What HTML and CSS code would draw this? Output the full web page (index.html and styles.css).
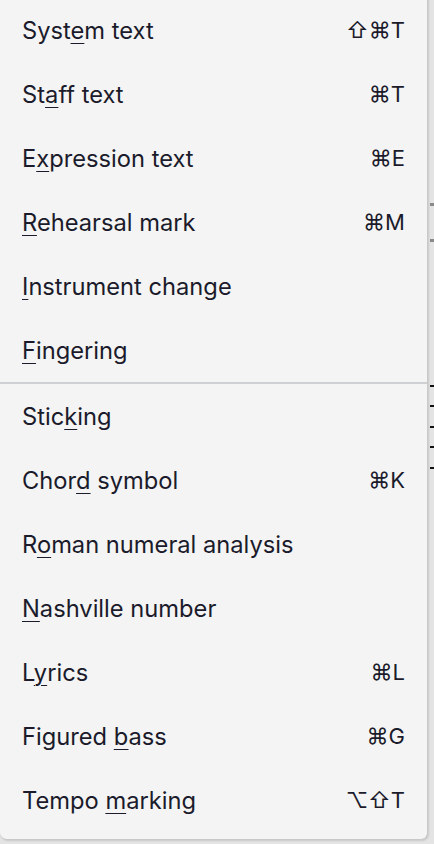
FILE: index.html
```html
<!DOCTYPE html>
<html lang="en">
<head>
    <meta charset="UTF-8">
    <meta name="viewport" content="width=device-width, initial-scale=1.0">
    <title>Text menu</title>
    <link rel="stylesheet" href="styles.css">
</head>
<body>
    <div class="score">
        <span class="mark grey" style="top: 203px;"></span>
        <span class="mark grey" style="top: 239px;"></span>
        <span class="mark" style="top: 385px;"></span>
        <span class="mark" style="top: 405px;"></span>
        <span class="mark" style="top: 426px;"></span>
        <span class="mark" style="top: 446px;"></span>
        <span class="mark" style="top: 467px;"></span>
    </div>

    <div class="menu">
        <div class="menu-group">
            <div class="menu-item"><span class="label">Syst<u>e</u>m text</span><span class="shortcut">⇧⌘T</span></div>
            <div class="menu-item"><span class="label">St<u>a</u>ff text</span><span class="shortcut">⌘T</span></div>
            <div class="menu-item"><span class="label">E<u>x</u>pression text</span><span class="shortcut">⌘E</span></div>
            <div class="menu-item"><span class="label"><u>R</u>ehearsal mark</span><span class="shortcut">⌘M</span></div>
            <div class="menu-item"><span class="label"><u>I</u>nstrument change</span></div>
            <div class="menu-item"><span class="label"><u>F</u>ingering</span></div>
        </div>
        <div class="divider"></div>
        <div class="menu-group">
            <div class="menu-item"><span class="label">Stic<u>k</u>ing</span></div>
            <div class="menu-item"><span class="label">Chor<u>d</u> symbol</span><span class="shortcut">⌘K</span></div>
            <div class="menu-item"><span class="label">R<u>o</u>man numeral analysis</span></div>
            <div class="menu-item"><span class="label"><u>N</u>ashville number</span></div>
            <div class="menu-item"><span class="label">L<u>y</u>rics</span><span class="shortcut">⌘L</span></div>
            <div class="menu-item"><span class="label">Figured <u>b</u>ass</span><span class="shortcut">⌘G</span></div>
            <div class="menu-item"><span class="label">Tempo <u>m</u>arking</span><span class="shortcut">⌥⇧T</span></div>
        </div>
    </div>
</body>
</html>
```

FILE: styles.css
```css
body {
    margin: 0;
    padding: 0;
    font-family: 'Inter', 'Noto Sans', sans-serif;
    background: #e4e4e4;
    height: 844px;
    overflow: hidden;
    position: relative;
}
.score {
    position: absolute;
    top: 0;
    left: 0;
    width: 100%;
    height: 100%;
}
.mark {
    position: absolute;
    left: 430px;
    width: 4px;
    height: 2px;
    background: #111;
}
.mark.grey {
    height: 3px;
    background: #8a8a8a;
}
.menu {
    position: relative;
    z-index: 2;
    width: 427px;
    margin-top: -2px;
    padding-bottom: 7px;
    background: #f4f4f4;
    border-right: 1px solid #c9c9c9;
    border-bottom: 1px solid #c9c9c9;
    border-radius: 0 0 7px 7px;
    box-shadow: 1px 1px 2px rgba(0, 0, 0, 0.12);
    color: #1b1b2b;
}
.menu-item {
    display: flex;
    justify-content: space-between;
    align-items: center;
    height: 64px;
    padding: 0 22px 0 22px;
    font-size: 23.7px;
}
.menu-item u {
    text-decoration-thickness: 1px;
    text-underline-offset: 4px;
}
.shortcut {
    font-size: 22px;
}
.divider {
    height: 2px;
    background: #cfd0d3;
}
```
